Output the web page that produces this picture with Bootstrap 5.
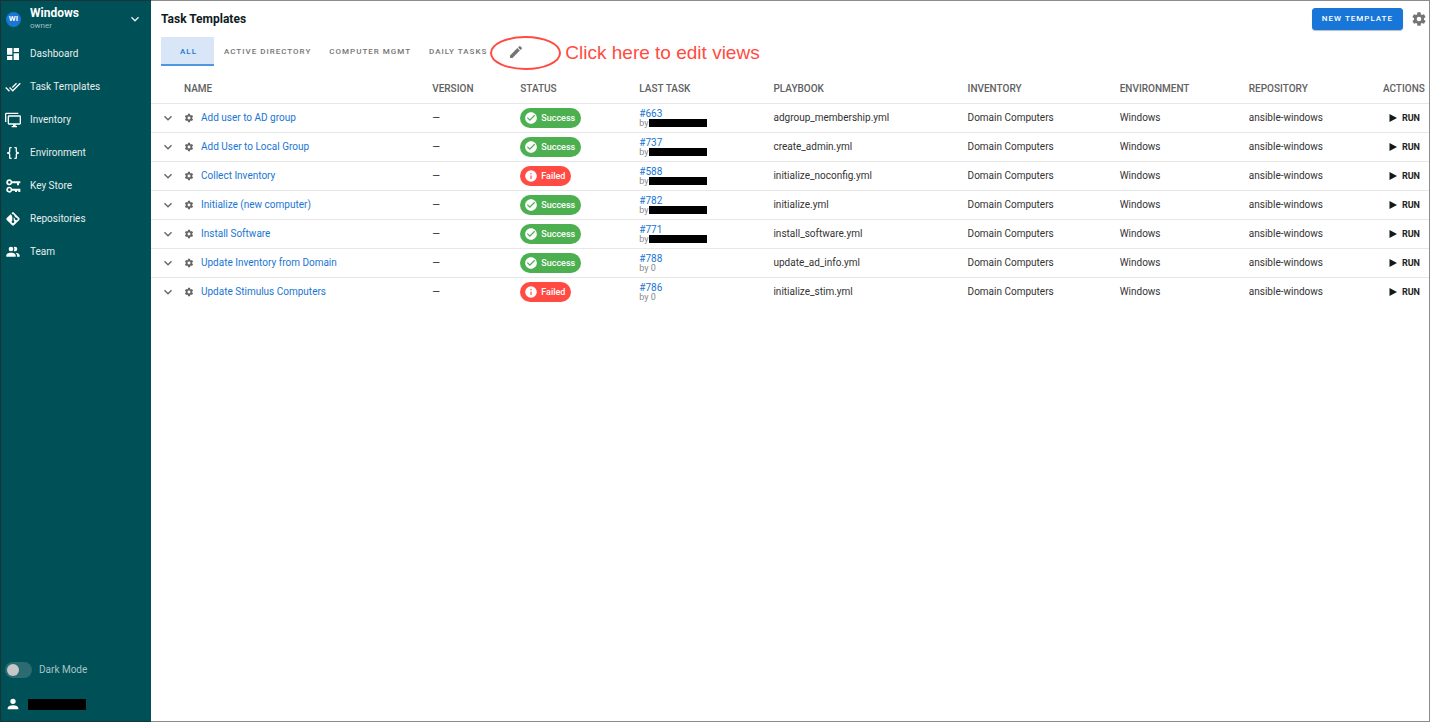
<!DOCTYPE html>
<html lang="en">
<head>
<meta charset="utf-8">
<meta name="viewport" content="width=device-width, initial-scale=1">
<title>Task Templates</title>
<link rel="stylesheet" href="https://cdn.jsdelivr.net/npm/bootstrap@5.3.0/dist/css/bootstrap.min.css">
<script src="https://cdn.jsdelivr.net/npm/bootstrap@5.3.0/dist/js/bootstrap.bundle.min.js" defer></script>
<style>
  body { font-family: Roboto, "Liberation Sans", sans-serif; font-size: 10px; line-height: 12px; color: #333; background: #fff; }
  svg { fill: currentColor; display: block; flex: none; }
  .i-10 { width: 10px; height: 10px; }
  .i-12 { width: 12px; height: 12px; }
  .i-14 { width: 14px; height: 14px; }
  .i-16 { width: 16px; height: 16px; }
  .app-shell { border: 1px solid #8b8b8b; }

  .side-panel { width: 151px; margin: -1px 0 -1px -1px; background: #005057; border: 1px solid #1c3336; border-right: 0; color: #e6eeee; }
  .project-btn { height: 36px; padding: 0 8px 0 5px; gap: 9px; color: inherit; background: none; border: 0; }
  .project-badge { width: 15px; height: 15px; background: #1976d2; color: #fff; font-size: 8px; font-weight: 700; }
  .project-name { font-size: 12px; line-height: 14px; font-weight: 700; color: #fff; }
  .project-role { font-size: 8px; line-height: 12px; color: #a3bfc1; }
  .side-link { height: 33px; padding: 0 4px; gap: 9px; color: inherit; text-decoration: none; }
  .side-link:hover { background: #0b5f66; color: #fff; }
  .side-link svg { color: #fff; }
  .dark-row { height: 34px; padding: 0 4px; gap: 7px; color: #a9c3c5; }
  .dark-row .form-check-input { width: 27px; height: 16px; margin: 0; float: none; border: 0; background-color: #2b6b71;
    background-image: url("data:image/svg+xml,%3csvg xmlns='http://www.w3.org/2000/svg' viewBox='-4 -4 8 8'%3e%3ccircle r='3' fill='%23c6c8c8'/%3e%3c/svg%3e"); }
  .user-row { height: 34px; padding: 0 4px; gap: 7px; color: #fff; }
  .redacted { display: inline-block; width: 58px; height: 8px; background: #000; }
  .user-row .redacted { height: 11px; }

  .top-bar { height: 36px; padding: 0 2px 0 10px; }
  .page-title { font-size: 12px; line-height: 16px; font-weight: 700; color: #0f1c1e; }
  .new-btn { --bs-btn-font-size: 8px; --bs-btn-line-height: 12px; --bs-btn-padding-x: 9px; --bs-btn-padding-y: 4px; --bs-btn-border-radius: 3px;
    --bs-btn-bg: #1976d9; --bs-btn-border-color: #1976d9; font-weight: 500; letter-spacing: 1px; height: 22px; box-shadow: 0 1px 1px #b8bcc4; }
  .plain-btn { padding: 0; border: 0; background: none; color: #757575; }

  .view-tabs { padding-left: 10px; height: 29px; }
  .view-tabs .nav-link { height: 29px; padding: 0 8px 0 10px; font-size: 8px; line-height: 29px; font-weight: 500; letter-spacing: 1px; color: #757575; border: 0; border-radius: 0; }
  .view-tabs .nav-link.active { width: 53px; text-align: center; color: #1976d2; background: #d9e6f7; border-bottom: 2px solid #4f97e2; }
  .edit-views { width: 42px; }
  .callout { left: -5px; top: -1px; color: #ff4b42; white-space: nowrap; pointer-events: none; }
  .callout span { font-family: "Liberation Sans", Arial, sans-serif; font-size: 19px; line-height: 24px; }
  .callout svg { width: 71px; height: 34px; fill: none; }

  .task-table { --bs-table-bg: transparent; table-layout: fixed; margin: 8px 0 0; color: #333; }
  .task-table > :not(caption) > * > * { height: 29px; padding: 0 0 0 11px; border-bottom: 1px solid #e7e7e7; vertical-align: middle; white-space: nowrap; color: inherit; }
  .task-table > tbody > tr:last-child > * { border-bottom: 0; }
  .task-table > thead > tr > th { padding-top: 2px; color: #616161; font-weight: 500; }
  .task-table > :not(caption) > tr > :last-child { padding-left: 10px; }
  .task-table a { color: #1976d2; text-decoration: none; }
  .task-table a:hover { text-decoration: underline; }
  .task-table svg { color: #666; }
  .c-exp { width: 22px; } .c-name { width: 248px; } .c-ver { width: 88px; } .c-stat { width: 119px; } .c-last { width: 134px; }
  .c-play { width: 194px; } .c-inv { width: 152px; } .c-env { width: 129px; } .c-repo { width: 135px; } .c-act { width: 56px; }
  .task-table > tbody > tr > :first-child { padding-left: 9px; }
  .name-cell { gap: 7px; }
  .state { height: 20px; padding: 0 6px 0 4px; gap: 3px; border-radius: 10px; color: #fff; font-size: 9px; font-weight: 500; background: #4caf50; }
  .state-failed { background: #ff4b42; }
  .task-table .state svg { color: #fff; }
  .by-line { font-size: 9px; line-height: 9px; height: 9px; color: #8a8a8a; }
  .last-cell { line-height: 11px; }
  .run-btn { gap: 3px; color: #222; font-size: 9px; font-weight: 700; }
  .task-table .run-btn svg { color: #10191b; }
</style>
</head>
<body>
<svg width="0" height="0" class="position-absolute" aria-hidden="true">
  <symbol id="chev" viewBox="0 0 24 24"><path d="M7.41 8.58L12 13.17l4.59-4.59L18 10l-6 6-6-6z"/></symbol>
  <symbol id="cog" viewBox="0 0 24 24"><path d="M12 15.5A3.5 3.5 0 0 1 8.5 12 3.5 3.5 0 0 1 12 8.5a3.5 3.5 0 0 1 3.5 3.5 3.5 3.5 0 0 1-3.5 3.5m7.43-2.53c.04-.32.07-.64.07-.97s-.03-.66-.07-1l2.11-1.63c.19-.15.24-.42.12-.64l-2-3.46c-.12-.22-.39-.31-.61-.22l-2.49 1c-.52-.39-1.06-.73-1.69-.98l-.37-2.65A.506.506 0 0 0 14 2h-4c-.25 0-.46.18-.5.42l-.37 2.65c-.63.25-1.17.59-1.69.98l-2.49-1c-.22-.09-.49 0-.61.22l-2 3.46c-.13.22-.07.49.12.64L4.57 11c-.04.34-.07.67-.07 1s.03.65.07.97l-2.11 1.66c-.19.15-.25.42-.12.64l2 3.46c.12.22.39.3.61.22l2.49-1.01c.52.4 1.06.74 1.69.99l.37 2.65c.04.24.25.42.5.42h4c.25 0 .46-.18.5-.42l.37-2.65c.63-.26 1.17-.59 1.69-.99l2.49 1.01c.22.08.49 0 .61-.22l2-3.46c.12-.22.07-.49-.12-.64z"/></symbol>
  <symbol id="ok" viewBox="0 0 24 24"><path d="M12 2C6.5 2 2 6.5 2 12s4.500 10 10 10 10-4.500 10-10S17.500 2 12 2m-2 15l-5-5 1.410-1.410L10 14.170l7.590-7.590L19 8z"/></symbol>
  <symbol id="info" viewBox="0 0 24 24"><path d="M13 9h-2V7h2m0 10h-2v-6h2m-1-9A10 10 0 1 0 12 22 10 10 0 0 0 12 2z"/></symbol>
  <symbol id="play" viewBox="0 0 24 24"><path d="M5 4v16l15-8z"/></symbol>
</svg>

<div class="app-shell d-flex min-vh-100">
  <aside class="side-panel d-flex flex-column flex-shrink-0">
    <button type="button" class="project-btn d-flex align-items-center text-start">
      <span class="project-badge rounded-circle d-flex align-items-center justify-content-center">WI</span>
      <span class="flex-grow-1"><span class="project-name d-block">Windows</span><span class="project-role d-block">owner</span></span>
      <svg class="i-16" viewBox="0 0 24 24"><use href="#chev"/></svg>
    </button>
    <nav class="d-flex flex-column" aria-label="Project">
      <a href="#" class="side-link d-flex align-items-center"><svg class="i-16" viewBox="0 0 24 24"><path d="M13 3v6h8V3m-8 18h8V11h-8M3 21h8v-6H3m0-2h8V3H3z"/></svg>Dashboard</a>
      <a href="#" class="side-link d-flex align-items-center"><svg class="i-16" viewBox="0 0 24 24"><path d="M.41 13.410L6 19l1.410-1.420L1.830 12m20.410-6.420L11.660 16.170 7.500 12l-1.430 1.410L11.660 19l12-12M18 7l-1.410-1.420-6.350 6.350 1.420 1.410z"/></svg>Task Templates</a>
      <a href="#" class="side-link d-flex align-items-center"><svg class="i-16" viewBox="0 0 24 24"><path d="M22 17V7H6v10h16m0-12a2 2 0 0 1 2 2v10a2 2 0 0 1-2 2h-6v2h2v2h-8v-2h2v-2H6a2 2 0 0 1-2-2V7a2 2 0 0 1 2-2h16M2 3v12H0V3a2 2 0 0 1 2-2h18v2H2z"/></svg>Inventory</a>
      <a href="#" class="side-link d-flex align-items-center"><svg class="i-16" viewBox="0 0 24 24"><path d="M8 3a2 2 0 0 0-2 2v4a2 2 0 0 1-2 2H3v2h1a2 2 0 0 1 2 2v4a2 2 0 0 0 2 2h2v-2H8v-5a2 2 0 0 0-2-2 2 2 0 0 0 2-2V5h2V3m6 0a2 2 0 0 1 2 2v4a2 2 0 0 0 2 2h1v2h-1a2 2 0 0 0-2 2v4a2 2 0 0 1-2 2h-2v-2h2v-5a2 2 0 0 1 2-2 2 2 0 0 1-2-2V5h-2V3z"/></svg>Environment</a>
      <a href="#" class="side-link d-flex align-items-center"><svg class="i-16" viewBox="0 0 24 24"><path d="M6.500 2a4.500 4.500 0 0 1 4.200 3H23v3h-2v3h-3V8h-7.300A4.500 4.500 0 1 1 6.500 2m0 2.500a2 2 0 1 0 0 4 2 2 0 0 0 0-4M6.500 13a4.500 4.500 0 0 1 4.200 3H23v5h-3v-2h-2v2h-3v-2h-4.300A4.500 4.500 0 1 1 6.500 13m0 2.500a2 2 0 1 0 0 4 2 2 0 0 0 0-4z"/></svg>Key Store</a>
      <a href="#" class="side-link d-flex align-items-center"><svg class="i-16" viewBox="0 0 24 24"><path d="M2.600 10.590L8.380 4.800l1.690 1.700c-.24.850.150 1.780.93 2.230v5.540c-.6.340-1 .990-1 1.730a2 2 0 0 0 2 2 2 2 0 0 0 2-2c0-.740-.4-1.390-1-1.730V9.410l2.070 2.090c-.070.150-.070.320-.070.500a2 2 0 0 0 2 2 2 2 0 0 0 2-2 2 2 0 0 0-2-2c-.180 0-.350 0-.5.070L13.930 7.500a1.980 1.980 0 0 0-1.150-2.340c-.430-.160-.880-.2-1.280-.090L9.800 3.380l.790-.780c.780-.790 2.040-.790 2.820 0l7.990 7.990c.790.780.790 2.040 0 2.820l-7.990 7.990c-.780.790-2.040.790-2.820 0L2.600 13.410c-.790-.780-.790-2.040 0-2.820z"/></svg>Repositories</a>
      <a href="#" class="side-link d-flex align-items-center"><svg class="i-16" viewBox="0 0 24 24"><path d="M16 17v2H2v-2s0-4 7-4 7 4 7 4m-3.500-9.500A3.500 3.500 0 1 0 9 11a3.500 3.500 0 0 0 3.500-3.500m3.440 5.500A5.320 5.320 0 0 1 18 17v2h4v-2s0-3.630-6.060-4M15 4a3.390 3.390 0 0 0-1.930.590 5 5 0 0 1 0 5.820A3.390 3.390 0 0 0 15 11a3.500 3.500 0 0 0 0-7z"/></svg>Team</a>
    </nav>
    <div class="mt-auto">
      <div class="dark-row form-switch d-flex align-items-center">
        <input class="form-check-input" type="checkbox" role="switch" id="darkMode">
        <label for="darkMode">Dark Mode</label>
      </div>
      <div class="user-row d-flex align-items-center">
        <svg class="i-16" viewBox="0 0 24 24"><path d="M12 4a4 4 0 1 1 0 8 4 4 0 0 1 0-8m0 10c4.420 0 8 1.790 8 4v2H4v-2c0-2.210 3.580-4 8-4z"/></svg>
        <span class="redacted"></span>
      </div>
    </div>
  </aside>

  <main class="flex-grow-1">
    <header class="top-bar d-flex align-items-center">
      <h1 class="page-title m-0 me-auto">Task Templates</h1>
      <button type="button" class="new-btn btn btn-primary">NEW TEMPLATE</button>
      <button type="button" class="plain-btn ms-2" aria-label="Settings"><svg class="i-16" viewBox="0 0 24 24"><use href="#cog"/></svg></button>
    </header>

    <nav class="view-tabs nav flex-nowrap" aria-label="Views">
      <a class="nav-link active" aria-current="page" href="#">ALL</a>
      <a class="nav-link" href="#">ACTIVE DIRECTORY</a>
      <a class="nav-link" href="#">COMPUTER MGMT</a>
      <a class="nav-link" href="#">DAILY TASKS</a>
      <div class="edit-views position-relative d-flex align-items-center justify-content-center">
        <button type="button" class="plain-btn" aria-label="Edit views"><svg class="i-16" viewBox="0 0 24 24"><path d="M20.710 7.040c.390-.390.390-1.040 0-1.410l-2.340-2.340c-.370-.390-1.020-.390-1.410 0l-1.840 1.830 3.750 3.750M3 17.250V21h3.750L17.810 9.930l-3.750-3.750z"/></svg></button>
        <div class="callout position-absolute d-flex align-items-center gap-1">
          <svg viewBox="0 0 71 34"><ellipse cx="35.500" cy="17" rx="34.500" ry="16" stroke="currentColor" stroke-width="2"/></svg>
          <span>Click here to edit views</span>
        </div>
      </div>
    </nav>

    <table class="task-table table">
      <colgroup><col class="c-exp"><col class="c-name"><col class="c-ver"><col class="c-stat"><col class="c-last"><col class="c-play"><col class="c-inv"><col class="c-env"><col class="c-repo"><col class="c-act"></colgroup>
      <thead>
        <tr><th></th><th scope="col">NAME</th><th scope="col">VERSION</th><th scope="col">STATUS</th><th scope="col">LAST TASK</th><th scope="col">PLAYBOOK</th><th scope="col">INVENTORY</th><th scope="col">ENVIRONMENT</th><th scope="col">REPOSITORY</th><th scope="col">ACTIONS</th></tr>
      </thead>
      <tbody id="templates"></tbody>
    </table>
  </main>
</div>

<script>
  const templates = [
    ["Add user to AD group", true, 663, null, "adgroup_membership.yml"],
    ["Add User to Local Group", true, 737, null, "create_admin.yml"],
    ["Collect Inventory", false, 588, null, "initialize_noconfig.yml"],
    ["Initialize (new computer)", true, 782, null, "initialize.yml"],
    ["Install Software", true, 771, null, "install_software.yml"],
    ["Update Inventory from Domain", true, 788, "0", "update_ad_info.yml"],
    ["Update Stimulus Computers", false, 786, "0", "initialize_stim.yml"]
  ];
  const icon = (id, size) => `<svg class="${size}" viewBox="0 0 24 24"><use href="#${id}"/></svg>`;
  document.getElementById("templates").innerHTML = templates.map(([name, ok, task, by, playbook]) => `
    <tr>
      <td><button type="button" class="plain-btn d-block" aria-label="Expand ${name}">${icon("chev", "i-16")}</button></td>
      <td><div class="name-cell d-flex align-items-center">${icon("cog", "i-10")}<a href="#">${name}</a></div></td>
      <td>—</td>
      <td><span class="state ${ok ? "" : "state-failed"} d-inline-flex align-items-center align-middle">${icon(ok ? "ok" : "info", "i-14")}${ok ? "Success" : "Failed"}</span></td>
      <td class="last-cell"><a href="#">#${task}</a><div class="by-line d-flex align-items-center">by${by === null ? '<span class="redacted"></span>' : "&nbsp;" + by}</div></td>
      <td>${playbook}</td>
      <td>Domain Computers</td>
      <td>Windows</td>
      <td>ansible-windows</td>
      <td><button type="button" class="plain-btn run-btn d-flex align-items-center ms-1">${icon("play", "i-12")}RUN</button></td>
    </tr>`).join("");
</script>
</body>
</html>
